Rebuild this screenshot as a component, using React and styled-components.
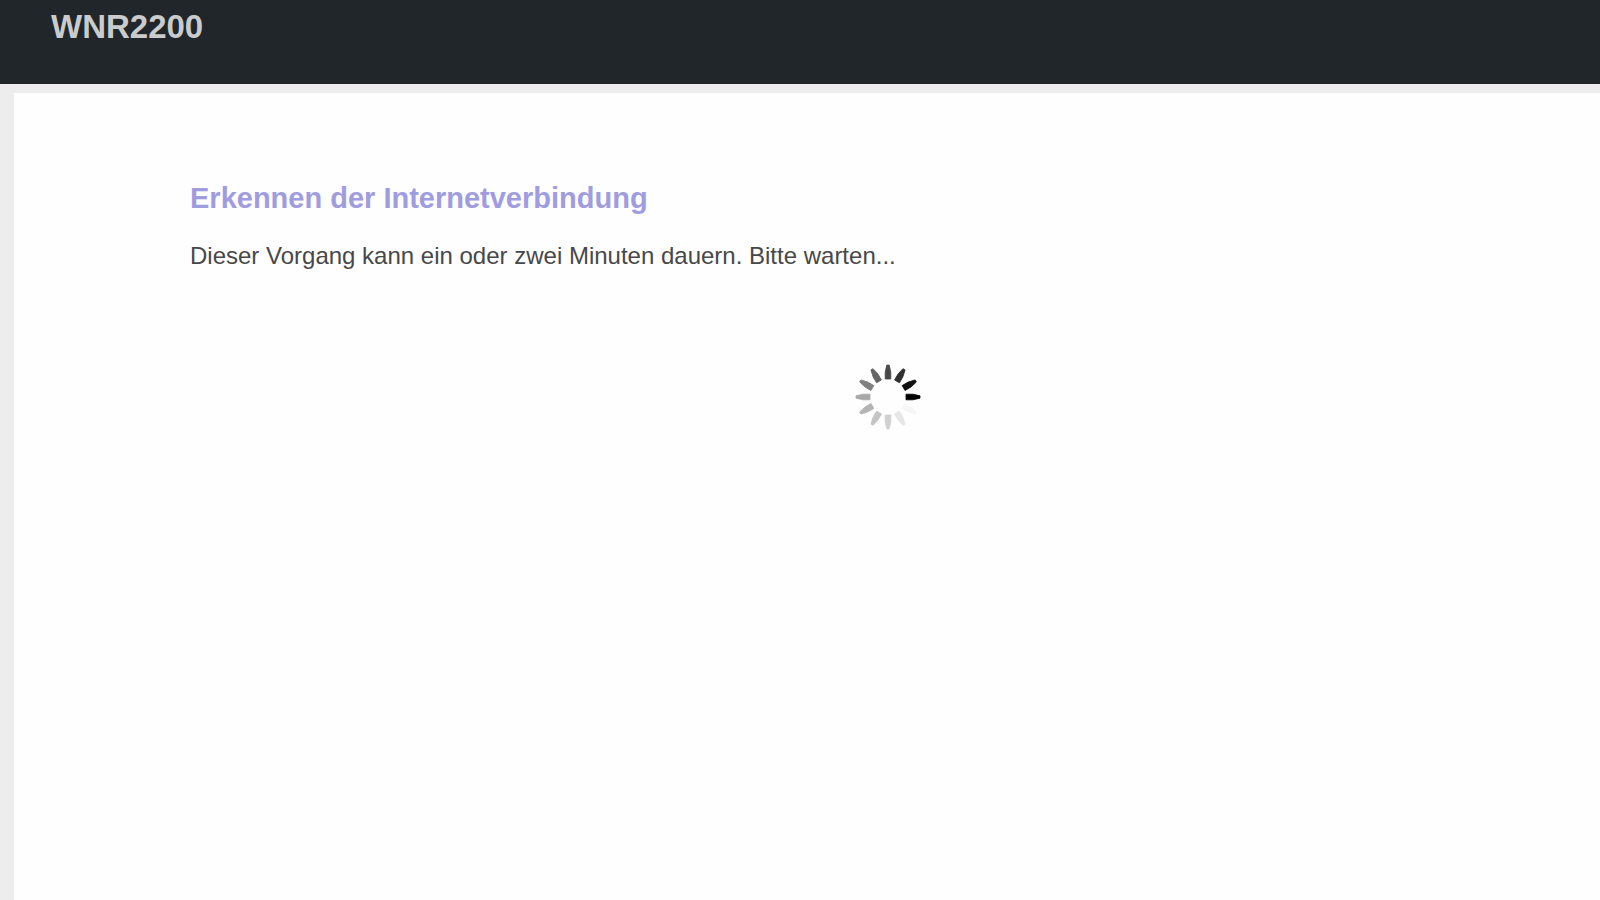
import React from "react";
import styled, { createGlobalStyle } from "styled-components";

const GlobalStyle = createGlobalStyle`
  body {
    margin: 0;
    background: #ededed;
    font-family: "Liberation Sans", Arial, sans-serif;
  }
`;

const Page = styled.div`
  display: flex;
  flex-direction: column;
  min-height: 100vh;
`;

const Header = styled.header`
  box-sizing: border-box;
  height: 84px;
  padding: 8px 51px;
  background: #202629;
`;

const Model = styled.h1`
  margin: 0;
  font-size: 33px;
  line-height: 38px;
  color: #c9cbcd;
`;

const Panel = styled.main`
  flex: 1;
  margin: 9px 0 0 14px;
  padding: 86px 14px 0 176px;
  background: #fefefe;
`;

const Heading = styled.h2`
  margin: 0;
  font-size: 29px;
  line-height: 38px;
  color: #a09ce0;
`;

const Message = styled.p`
  margin: 23px 0 0;
  font-size: 24px;
  line-height: 32px;
  color: #484848;
`;

const SpinnerRow = styled.div`
  display: flex;
  justify-content: center;
  margin-top: 89px;
`;

const BLADES = [
  "#000000", "#101010", "#303030", "#484848", "#646464", "#808080",
  "#a8a8a8", "#b4b4b4", "#c4c4c4", "#d0d0d0", "#e6e6e6", "#f6f6f6",
];

function Spinner() {
  return (
    <svg width="72" height="72" viewBox="-36 -36 72 72" role="img" aria-label="Bitte warten">
      {BLADES.map((color, i) => (
        <path
          key={color}
          d="M18 -2.8 H25 L32 -1.2 V1.2 L25 2.8 H18 Z"
          fill={color}
          stroke={color}
          strokeLinejoin="round"
          strokeWidth="0.8"
          transform={`rotate(${-30 * i})`}
        />
      ))}
    </svg>
  );
}

export default function App() {
  return (
    <Page>
      <GlobalStyle />
      <Header>
        <Model>WNR2200</Model>
      </Header>
      <Panel>
        <Heading>Erkennen der Internetverbindung</Heading>
        <Message>Dieser Vorgang kann ein oder zwei Minuten dauern. Bitte warten...</Message>
        <SpinnerRow>
          <Spinner />
        </SpinnerRow>
      </Panel>
    </Page>
  );
}
